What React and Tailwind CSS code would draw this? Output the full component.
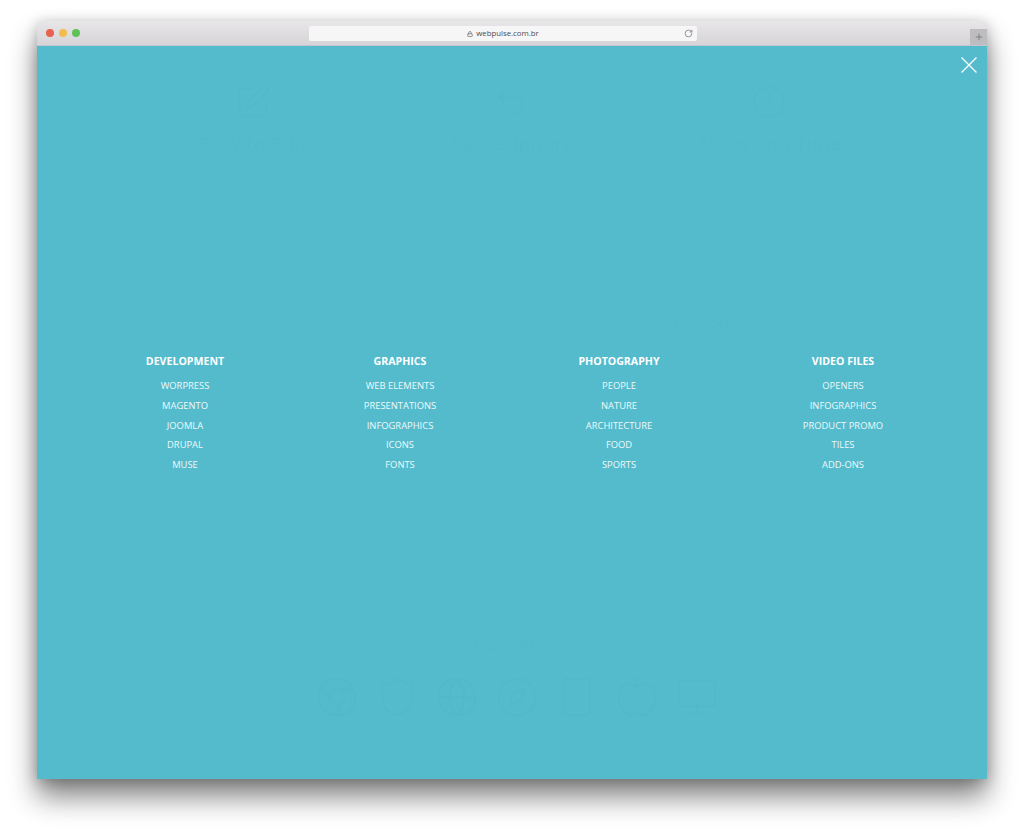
import React from "react";
import { Lock, Plus, RotateCw, PenSquare, Undo2, Clock, Chrome, Globe, Compass, Apple, Smartphone, Shield, Monitor } from "lucide-react";

const menus = [
  { title: "DEVELOPMENT", links: ["WORPRESS", "MAGENTO", "JOOMLA", "DRUPAL", "MUSE"], gap: "ml-0" },
  { title: "GRAPHICS", links: ["WEB ELEMENTS", "PRESENTATIONS", "INFOGRAPHICS", "ICONS", "FONTS"], gap: "ml-[15px]" },
  { title: "PHOTOGRAPHY", links: ["PEOPLE", "NATURE", "ARCHITECTURE", "FOOD", "SPORTS"], gap: "ml-[19px]" },
  { title: "VIDEO FILES", links: ["OPENERS", "INFOGRAPHICS", "PRODUCT PROMO", "TILES", "ADD-ONS"], gap: "ml-[24px]" },
];

const features = [
  { icon: PenSquare, title: "Easy to Edit" },
  { icon: Undo2, title: "Fast Support" },
  { icon: Clock, title: "Always on Time" },
];

const browsers = [Chrome, Shield, Globe, Compass, Smartphone, Apple, Monitor];

const TitleBar = () => (
  <div className="flex h-[25px] rounded-t-[4px] border-b border-[#c3c6d0] bg-gradient-to-b from-[#e8e6e8] to-[#d6d4d7]">
    <div className="flex w-[272px] items-center gap-[5px] pl-[9px]">
      <span className="h-[8px] w-[8px] rounded-full bg-[#e8604f]" />
      <span className="h-[8px] w-[8px] rounded-full bg-[#f2bd4e]" />
      <span className="h-[8px] w-[8px] rounded-full bg-[#5fc257]" />
    </div>
    <div className="relative mt-[5px] flex h-[15px] w-[388px] items-center justify-center rounded-[2px] bg-[#f6f6f7]">
      <Lock size={6} className="mr-[3px] text-[#77777c]" strokeWidth={3} />
      <span className="text-[7.8px] text-[#4c4c52]">webpulse.com.br</span>
      <RotateCw size={9} className="absolute right-[4px] text-[#77777c]" />
    </div>
    <div className="flex-1" />
    <div className="mt-[8px] flex w-[17px] items-center justify-center bg-[#bdbcbf]">
      <Plus size={10} className="text-[#77777c]" />
    </div>
  </div>
);

// faded page that sits under the overlay menu
const PageBehind = () => (
  <div className="h-full bg-[#4fb5c6] text-[#2f8fa1]">
    <div className="flex pl-[87px] pt-[38px]">
      {features.map(({ icon: Icon, title }) => (
        <div key={title} className="flex w-[258px] flex-col items-center">
          <Icon size={36} strokeWidth={1.5} />
          <p className="mt-[10px] text-[20px] leading-[28px]">{title}</p>
          <p className="mt-[10px] w-[170px] text-center text-[11px] leading-[15px]">
            Lorem ipsum dolor sit amet consectetur elit
          </p>
        </div>
      ))}
    </div>
    <p className="ml-[636px] mt-[112px] text-[18px] leading-[24px]">Device</p>
    <p className="ml-[430px] mt-[298px] text-[18px] leading-[24px]">Browsers</p>
    <div className="ml-[278px] mt-[19px] flex gap-[16px]">
      {browsers.map((Icon, i) => (
        <Icon key={i} size={44} strokeWidth={1.5} />
      ))}
    </div>
  </div>
);

const MenuColumn = ({ menu }) => (
  <div className={`w-[200px] text-center ${menu.gap}`}>
    <h3 className="text-[10.6px] font-bold leading-[16px] text-white">{menu.title}</h3>
    <ul className="mt-[7px]">
      {menu.links.map((link) => (
        <li key={link} className="text-[9.4px] leading-[19.75px] text-[#eef9fb]">
          {link}
        </li>
      ))}
    </ul>
  </div>
);

const MenuOverlay = () => (
  <div className="absolute inset-0 bg-[#53bccc]/95">
    <div className="flex justify-end pr-[10px] pt-[11px]">
      <svg width="16" height="16" viewBox="0 0 16 16" className="text-white">
        <path d="M0.5 0.5 L15.5 15.5 M15.5 0.5 L0.5 15.5" stroke="currentColor" strokeWidth="1.3" fill="none" />
      </svg>
    </div>
    <div className="mt-[280px] flex pl-[48px]">
      {menus.map((menu) => (
        <MenuColumn key={menu.title} menu={menu} />
      ))}
    </div>
  </div>
);

const App = () => (
  <div className="h-[832px] overflow-hidden bg-white pl-[37px] pt-[21px] font-['Open_Sans',sans-serif]">
    <div className="flex h-[758px] w-[950px] flex-col rounded-[4px] shadow-[0_18px_28px_rgba(0,0,0,0.48),0_2px_14px_rgba(0,0,0,0.22)]">
      <TitleBar />
      <div className="relative flex-1 overflow-hidden rounded-b-[2px]">
        <PageBehind />
        <MenuOverlay />
      </div>
    </div>
  </div>
);

export default App;
